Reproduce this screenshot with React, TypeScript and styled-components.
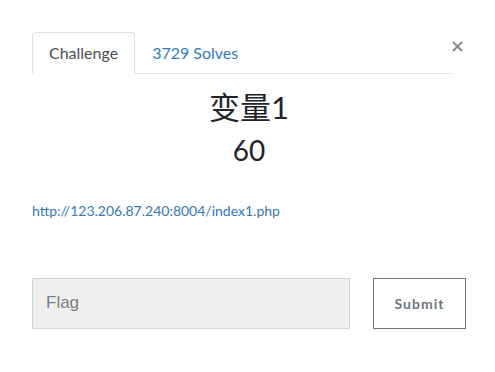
import React from "react";
import styled, { createGlobalStyle } from "styled-components";

const Global = createGlobalStyle`
  html, body { margin: 0; padding: 0; background: #fff; }
  body { font-family: Lato, "Noto Sans CJK SC", sans-serif; color: #212529; }
  * { box-sizing: border-box; }
`;

const Modal = styled.div`
  width: 495px;
  height: 372px;
  padding: 32px 29px 0 32px;
  display: flex;
  flex-direction: column;
`;

const Header = styled.div`
  position: relative;
  width: 420px;
`;

const Tabs = styled.ul`
  list-style: none;
  margin: 0;
  padding: 0;
  display: flex;
  border-bottom: 1px solid #dee2e6;
`;

const Tab = styled.li<{ $active?: boolean }>`
  margin-bottom: -1px;
  padding: 8px 16px;
  font-size: 16px;
  line-height: 24px;
  border: 1px solid ${(p) => (p.$active ? "#dee2e6" : "transparent")};
  border-bottom-color: ${(p) => (p.$active ? "#fff" : "transparent")};
  border-radius: 4px 4px 0 0;
  background: ${(p) => (p.$active ? "#fff" : "transparent")};
  color: ${(p) => (p.$active ? "#495057" : "#337ab7")};
`;

const Close = styled.button`
  position: absolute;
  right: -12px;
  top: 7px;
  width: 14px;
  height: 14px;
  padding: 0;
  border: 0;
  background: none;
  display: flex;
  align-items: center;
  justify-content: center;
`;

const Heading = styled.h3<{ $size: number; $gap: number }>`
  margin: ${(p) => p.$gap}px 0 0;
  width: 434px;
  text-align: center;
  font-size: ${(p) => p.$size}px;
  font-weight: 400;
  line-height: 1.2;
`;

const Link = styled.a`
  margin-top: 33px;
  font-size: 14px;
  line-height: 20px;
  color: #337ab7;
  text-decoration: none;
`;

const FormRow = styled.div`
  margin-top: 57px;
  display: flex;
  gap: 23px;
  width: 434px;
`;

const Input = styled.input`
  width: 318px;
  height: 51px;
  padding: 0 13px;
  background: #efefef;
  border: 1px solid #d0d4d8;
  border-radius: 0;
  font-family: "Liberation Sans", Arial, sans-serif;
  font-size: 17px;
  color: #495057;
  outline: none;
  &::placeholder { color: #7b7f84; }
`;

const Submit = styled.button`
  width: 93px;
  height: 51px;
  background: #fff;
  border: 1px solid #6c757d;
  border-radius: 0;
  font-family: Lato, sans-serif;
  font-weight: 700;
  font-size: 14px;
  letter-spacing: 1px;
  color: #6c757d;
`;

export default function App() {
  return (
    <>
      <Global />
      <Modal>
        <Header>
          <Tabs>
            <Tab $active>Challenge</Tab>
            <Tab>3729 Solves</Tab>
          </Tabs>
          <Close aria-label="Close">
            <svg width="11" height="11" viewBox="0 0 11 11">
              <path d="M1 1 L10 10 M10 1 L1 10" stroke="#8a8a8a" strokeWidth="2" />
            </svg>
          </Close>
        </Header>
        <Heading $size={31} $gap={15}>变量1</Heading>
        <Heading $size={28} $gap={8}>60</Heading>
        <Link href="#">http://123.206.87.240:8004/index1.php</Link>
        <FormRow>
          <Input placeholder="Flag" />
          <Submit>Submit</Submit>
        </FormRow>
      </Modal>
    </>
  );
}
